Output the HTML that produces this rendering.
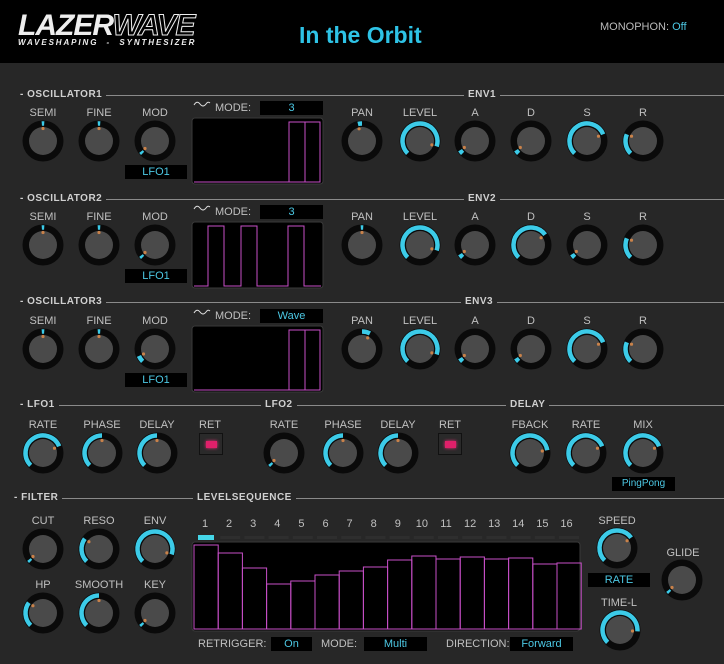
<!DOCTYPE html>
<html><head><meta charset="utf-8">
<style>
*{margin:0;padding:0;box-sizing:border-box}
body{width:724px;height:664px;background:#272727;font-family:"Liberation Sans",sans-serif;position:relative;overflow:hidden;color:#c8c8c8}
.hdr{position:absolute;left:0;top:0;width:724px;height:63px;background:#000}
.t{position:absolute;font-size:11px;color:#c0c0c0;white-space:nowrap}
.c{transform:translateX(-50%)}
.sec{position:absolute;font-size:10px;font-weight:bold;color:#d0d0d0;letter-spacing:.5px;background:#272727;padding:0 4px;white-space:nowrap}
.line{position:absolute;height:1px;background:#8a8a8a}
.box{position:absolute;background:#000;color:#4cc8e4;font-size:11px;text-align:center;line-height:14px;height:14px}
.ret{position:absolute;width:24px;height:22px;border:1px solid #111;background:#2a2a2a}
.ret i{position:absolute;left:6px;top:7px;width:11px;height:7px;background:#e0206a;box-shadow:0 0 3px #ff3080}
</style></head><body>
<div class="hdr">
 <div style="position:absolute;left:18px;top:11px;font-size:30px;font-style:italic;font-weight:bold;color:#eee;letter-spacing:-1px;line-height:30px">LAZER<span style="color:#000;-webkit-text-stroke:1px #eee">WAVE</span></div>
 <div style="position:absolute;left:18px;top:38px;font-size:8px;font-style:italic;font-weight:bold;color:#eee;letter-spacing:1.9px">WAVESHAPING&nbsp; - &nbsp;SYNTHESIZER</div>
 <div style="position:absolute;left:299px;top:22px;font-size:23px;font-weight:bold;color:#2ec3e6">In the Orbit</div>
 <div style="position:absolute;left:600px;top:21px;font-size:11px;color:#bbb">MONOPHON: <span style="color:#4cc8e4">Off</span></div>
</div>

<div class="line" style="left:20px;top:95px;width:704px"></div>
<div class="line" style="left:20px;top:199px;width:704px"></div>
<div class="line" style="left:20px;top:302px;width:704px"></div>
<div class="line" style="left:20px;top:405px;width:704px"></div>
<div class="line" style="left:20px;top:498px;width:704px"></div>
<div class="sec" style="left:16px;top:89px">- OSCILLATOR1</div>
<div class="sec" style="left:464px;top:89px">ENV1</div>
<div class="sec" style="left:16px;top:193px">- OSCILLATOR2</div>
<div class="sec" style="left:464px;top:193px">ENV2</div>
<div class="sec" style="left:16px;top:296px">- OSCILLATOR3</div>
<div class="sec" style="left:461px;top:296px">ENV3</div>
<div class="sec" style="left:16px;top:399px">- LFO1</div>
<div class="sec" style="left:261px;top:399px">LFO2</div>
<div class="sec" style="left:506px;top:399px">DELAY</div>
<div class="sec" style="left:10px;top:492px">- FILTER</div>
<div class="sec" style="left:193px;top:492px">LEVELSEQUENCE</div>

<div class="t c" style="left:43px;top:107px">SEMI</div><div class="t c" style="left:99px;top:107px">FINE</div><div class="t c" style="left:155px;top:107px">MOD</div>
<div class="t c" style="left:362px;top:107px">PAN</div><div class="t c" style="left:420px;top:107px">LEVEL</div><div class="t c" style="left:475px;top:107px">A</div><div class="t c" style="left:531px;top:107px">D</div><div class="t c" style="left:587px;top:107px">S</div><div class="t c" style="left:643px;top:107px">R</div>
<div class="box" style="left:125px;top:165px;width:62px">LFO1</div>
<div class="t" style="left:215px;top:102px">MODE:</div><div class="box" style="left:260px;top:101px;width:63px">3</div>

<div class="t c" style="left:43px;top:211px">SEMI</div><div class="t c" style="left:99px;top:211px">FINE</div><div class="t c" style="left:155px;top:211px">MOD</div>
<div class="t c" style="left:362px;top:211px">PAN</div><div class="t c" style="left:420px;top:211px">LEVEL</div><div class="t c" style="left:475px;top:211px">A</div><div class="t c" style="left:531px;top:211px">D</div><div class="t c" style="left:587px;top:211px">S</div><div class="t c" style="left:643px;top:211px">R</div>
<div class="box" style="left:125px;top:269px;width:62px">LFO1</div>
<div class="t" style="left:215px;top:206px">MODE:</div><div class="box" style="left:260px;top:205px;width:63px">3</div>

<div class="t c" style="left:43px;top:315px">SEMI</div><div class="t c" style="left:99px;top:315px">FINE</div><div class="t c" style="left:155px;top:315px">MOD</div>
<div class="t c" style="left:362px;top:315px">PAN</div><div class="t c" style="left:420px;top:315px">LEVEL</div><div class="t c" style="left:475px;top:315px">A</div><div class="t c" style="left:531px;top:315px">D</div><div class="t c" style="left:587px;top:315px">S</div><div class="t c" style="left:643px;top:315px">R</div>
<div class="box" style="left:125px;top:373px;width:62px">LFO1</div>
<div class="t" style="left:215px;top:310px">MODE:</div><div class="box" style="left:260px;top:309px;width:63px">Wave</div>

<div class="t c" style="left:43px;top:419px">RATE</div><div class="t c" style="left:102px;top:419px">PHASE</div><div class="t c" style="left:157px;top:419px">DELAY</div><div class="t c" style="left:210px;top:419px">RET</div>
<div class="ret" style="left:199px;top:433px"><i></i></div>
<div class="t c" style="left:284px;top:419px">RATE</div><div class="t c" style="left:343px;top:419px">PHASE</div><div class="t c" style="left:398px;top:419px">DELAY</div><div class="t c" style="left:450px;top:419px">RET</div>
<div class="ret" style="left:438px;top:433px"><i></i></div>
<div class="t c" style="left:530px;top:419px">FBACK</div><div class="t c" style="left:586px;top:419px">RATE</div><div class="t c" style="left:643px;top:419px">MIX</div>
<div class="box" style="left:612px;top:477px;width:63px;font-size:10px">PingPong</div>

<div class="t c" style="left:43px;top:515px">CUT</div><div class="t c" style="left:99px;top:515px">RESO</div><div class="t c" style="left:155px;top:515px">ENV</div>
<div class="t c" style="left:43px;top:579px">HP</div><div class="t c" style="left:99px;top:579px">SMOOTH</div><div class="t c" style="left:155px;top:579px">KEY</div>

<div class="t" style="left:198px;top:638px">RETRIGGER:</div><div class="box" style="left:271px;top:637px;width:41px">On</div>
<div class="t" style="left:321px;top:638px">MODE:</div><div class="box" style="left:364px;top:637px;width:63px">Multi</div>
<div class="t" style="left:446px;top:638px">DIRECTION:</div><div class="box" style="left:510px;top:637px;width:63px">Forward</div>
<div class="t c" style="left:617px;top:515px">SPEED</div>
<div class="box" style="left:588px;top:573px;width:62px">RATE</div>
<div class="t c" style="left:619px;top:597px">TIME-L</div>
<div class="t c" style="left:683px;top:547px">GLIDE</div>

<svg id="g" width="724" height="664" style="position:absolute;left:0;top:0;pointer-events:none"></svg>
<script>
var s='';
function scr(x,y,w,h){s+='<rect x="'+x+'" y="'+y+'" width="'+w+'" height="'+h+'" rx="3" fill="#000" stroke="#3a3a3a"/>';}
function wave(y){s+='<path d="M194 '+(y+4)+' q3 -5 6 -1 q3 4 6 0 q2 -3 4 -1" stroke="#ddd" fill="none" stroke-width="1"/>';}
var P='#c94fc9';
scr(192,118,131,66);scr(192,222,131,66);scr(192,326,131,66);
wave(101);wave(205);wave(309);
s+='<path d="M194 182 H289 V122 H305 V182 M305 122 H320 V182 H194" stroke="'+P+'" fill="none"/>';
s+='<path d="M194 286 H208 V226 H224 V286 H241 V226 H257 V286 H288 V226 H304 V286 H321" stroke="'+P+'" fill="none"/>';
s+='<path d="M194 390 H289 V330 H305 V390 M305 330 H320 V390 H194" stroke="'+P+'" fill="none"/>';
scr(192,542,388,89);
var tops=[545,553,568,584,581,575,571,567,560,556,559,557,559,558,564,563];
for(var i=0;i<16;i++){var x=194+i*24.2;s+='<rect x="'+x.toFixed(1)+'" y="'+tops[i]+'" width="24.2" height="'+(629-tops[i])+'" fill="none" stroke="'+P+'"/>';
 s+='<text x="'+(205+i*24.1)+'" y="527" fill="#c0c0c0" font-size="11" text-anchor="middle" font-family="Liberation Sans">'+(i+1)+'</text>';
 if(i>0)s+='<rect x="'+(x+2)+'" y="536" width="20" height="3" fill="#2e2e2e"/>';}
s+='<rect x="198" y="535" width="16" height="5" fill="#45d6e8"/>';
function k(cx,cy,v,bi){
 s+='<circle cx="'+cx+'" cy="'+cy+'" r="20.5" fill="#0a0a0a"/><circle cx="'+cx+'" cy="'+cy+'" r="14" fill="#4a4a4a"/>';
 var a0=bi?0:-135,a1=-135+270*v,r=17.5;
 var lo=Math.min(a0,a1),hi=Math.max(a0,a1);
 if(hi-lo<6){lo=a1-4;hi=a1+4;}
 function pt(a,rr){var t=(a-90)*Math.PI/180;return [cx+rr*Math.cos(t),cy+rr*Math.sin(t)];}
 var p=pt(lo,r),q=pt(hi,r);
 s+='<path d="M'+p[0].toFixed(2)+' '+p[1].toFixed(2)+' A'+r+' '+r+' 0 '+((hi-lo)>180?1:0)+' 1 '+q[0].toFixed(2)+' '+q[1].toFixed(2)+'" stroke="#3ccbe8" stroke-width="4.5" fill="none"/>';
 var d=pt(a1,12.5);s+='<circle cx="'+d[0].toFixed(1)+'" cy="'+d[1].toFixed(1)+'" r="1.6" fill="#c9824a"/>';
}
var rows=[[141,[.5,.5,.03],[.45,.9,.05,.05,.75,.25]],[245,[.5,.5,.03],[.5,.9,.05,.7,.05,.25]],[349,[.5,.5,.08],[.6,.9,.05,.05,.75,.25]]];
rows.forEach(function(r){var y=r[0];
 k(43,y,r[1][0],1);k(99,y,r[1][1],1);k(155,y,r[1][2]);
 var xs=[362,420,475,531,587,643];
 xs.forEach(function(x,j){k(x,y,r[2][j],j==0);});});
k(43,453,.75);k(102,453,.5);k(157,453,.5);
k(284,453,.03);k(343,453,.5);k(398,453,.5);
k(530,453,.8);k(586,453,.75);k(643,453,.75);
k(43,549,.03);k(99,549,.3);k(155,549,.9);
k(43,613,.3);k(99,613,.5);k(155,613,.03);
k(617,548,.7);k(620,630,.85);k(682,580,.03);
document.getElementById('g').innerHTML=s;
</script>
</body></html>
